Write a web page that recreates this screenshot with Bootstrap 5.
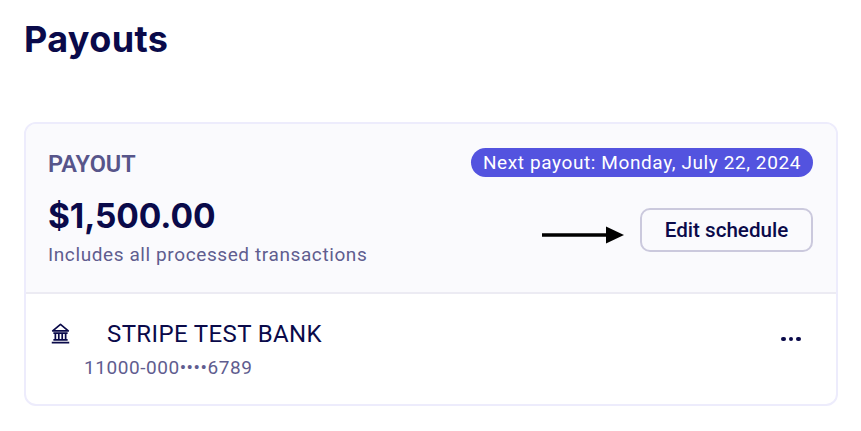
<!DOCTYPE html>
<html lang="en">
<head>
<meta charset="utf-8">
<title>Payouts</title>
<link href="https://cdn.jsdelivr.net/npm/bootstrap@5.3.0/dist/css/bootstrap.min.css" rel="stylesheet">
<style>
html, body { background:#fff; overflow:hidden; }
body { font-family:Roboto, sans-serif; color:#0a0a4a; }
.page-wrap { padding:14px 23px 0 24px; }
.page-title { font-family:Inter, sans-serif; font-weight:700; font-size:36px; line-height:50px; letter-spacing:.35px; color:#0a0a4a; margin:0 0 58px 0; }
.payout-card { border:2px solid #edecfc; border-radius:12px; overflow:hidden; height:284px; }
.payout-head { background:#fafafd; border-bottom:2px solid #ecebf3; height:170px; padding:23px 23px 0 22px; }
.payout-label { font-weight:600; font-size:23.5px; line-height:28px; color:#57558a; margin-top:3px; }
.payout-pill { background:#5353df; color:#fff; font-size:19px; line-height:29px; height:29px; padding:0 12px; border-radius:15px; letter-spacing:.6px; margin-bottom:1px; }
.payout-amount { font-family:Inter, sans-serif; font-weight:700; font-size:33.5px; line-height:44px; color:#0a0a4a; margin-top:16px; letter-spacing:-.1px; }
.payout-sub { font-size:19px; line-height:26px; color:#5f5d8f; letter-spacing:.6px; margin-top:4px; }
.payout-actions { margin-top:30px; }
.edit-btn { background:transparent; border:2px solid #cbc9dd; border-radius:10px; color:#0a0a4a; font-weight:500; font-size:20.6px; line-height:26px; width:173px; height:44px; padding:0; }
.arrow-svg { width:82px; height:20px; margin-right:16px; margin-top:9px; }
.bank-row { padding:24px 23px 0 25px; }
.bank-icon { width:19px; height:21px; margin-right:37px; margin-top:-2px; }
.bank-name { font-size:24px; line-height:32px; letter-spacing:.38px; color:#0a0a4a; }
.bank-num { font-size:19px; line-height:26px; color:#5f5d8f; letter-spacing:.55px; margin-left:33px; margin-top:5px; }
.more-dots { gap:3px; margin-right:12px; margin-top:10px; }
.more-dots i { display:block; width:4.6px; height:4.6px; border-radius:50%; background:#0a0a4a; }
</style>
</head>
<body>
<div class="page-wrap">
  <h1 class="page-title">Payouts</h1>
  <div class="payout-card bg-white">
    <div class="payout-head">
      <div class="d-flex justify-content-between align-items-center">
        <div class="payout-label">PAYOUT</div>
        <div class="payout-pill">Next payout: Monday, July 22, 2024</div>
      </div>
      <div class="d-flex justify-content-between align-items-start">
        <div>
          <div class="payout-amount">$1,500.00</div>
          <div class="payout-sub">Includes all processed transactions</div>
        </div>
        <div class="d-flex align-items-center payout-actions">
          <svg class="arrow-svg" viewBox="0 0 82 20" aria-hidden="true"><path d="M0 10H66" stroke="#000" stroke-width="3.6"/><path d="M64 1.5L82 10L64 18.5Z" fill="#000"/></svg>
          <button type="button" class="btn edit-btn">Edit schedule</button>
        </div>
      </div>
    </div>
    <div class="bank-row">
      <div class="d-flex align-items-center justify-content-between">
        <div class="d-flex align-items-center">
          <svg class="bank-icon" viewBox="0 0 20 22" fill="none" stroke="#0a0a4a" stroke-width="1.8" aria-hidden="true"><path d="M1.8 8.2L10 1.4L18.2 8.2Z" stroke-linejoin="round"/><path d="M2.5 10.6H17.5M4.6 10.6V17.6M8.2 10.6V17.6M11.8 10.6V17.6M15.4 10.6V17.6M2.5 17.8H17.5M.8 20.6H19.2"/></svg>
          <div class="bank-name">STRIPE TEST BANK</div>
        </div>
        <div class="d-flex more-dots"><i></i><i></i><i></i></div>
      </div>
      <div class="bank-num">11000-000••••6789</div>
    </div>
  </div>
</div>
<script src="https://cdn.jsdelivr.net/npm/bootstrap@5.3.0/dist/js/bootstrap.bundle.min.js"></script>
</body>
</html>
